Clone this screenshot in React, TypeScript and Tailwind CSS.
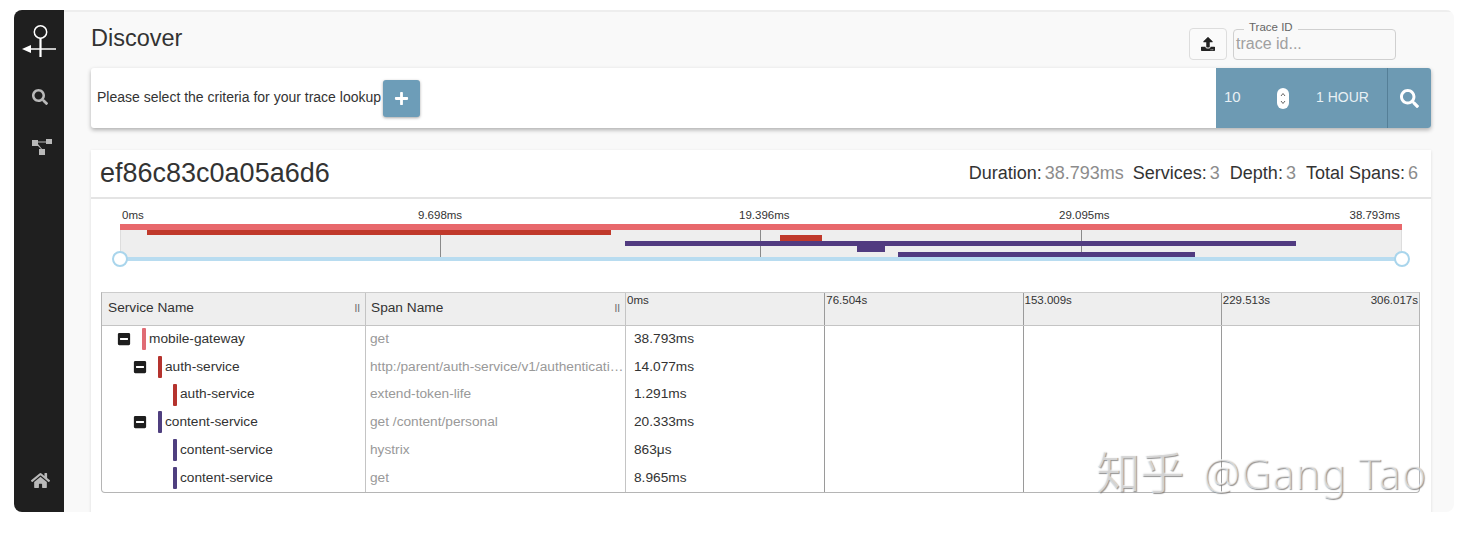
import { FaHome, FaMinusSquare, FaPlus, FaSearch, FaUpload } from 'react-icons/fa';

const MINIMAP_LEFT = 120;

const MINIMAP_TICKS = [440, 760, 1081];

const MINIMAP_LABELS = [
    { label: '0ms', className: 'left-[31px]' },
    { label: '9.698ms', className: 'left-[327px]' },
    { label: '19.396ms', className: 'left-[648px]' },
    { label: '29.095ms', className: 'left-[968px]' },
    { label: '38.793ms', className: 'right-[31px]' },
];

const MINIMAP_SPANS = [
    { x1: 147, x2: 611, y: 230, h: 5, color: '#c0392b' },
    { x1: 780, x2: 822, y: 235, h: 6, color: '#c0392b' },
    { x1: 625, x2: 1296, y: 241, h: 5, color: '#513b80' },
    { x1: 857, x2: 885, y: 246, h: 6, color: '#513b80' },
    { x1: 898, x2: 1195, y: 252, h: 5, color: '#513b80' },
];

const ROWS = [
    { indent: 0, collapsible: true, color: '#e06c75', service: 'mobile-gateway', span: 'get', duration: '38.793ms' },
    { indent: 16, collapsible: true, color: '#b5332e', service: 'auth-service', span: 'http:/parent/auth-service/v1/authenticati…', duration: '14.077ms' },
    { indent: 31, collapsible: false, color: '#b5332e', service: 'auth-service', span: 'extend-token-life', duration: '1.291ms' },
    { indent: 16, collapsible: true, color: '#4f3f7f', service: 'content-service', span: 'get /content/personal', duration: '20.333ms' },
    { indent: 31, collapsible: false, color: '#4f3f7f', service: 'content-service', span: 'hystrix', duration: '863μs' },
    { indent: 31, collapsible: false, color: '#4f3f7f', service: 'content-service', span: 'get', duration: '8.965ms' },
];

function Logo() {
    return (
        <svg width="36" height="36" viewBox="0 0 36 36" fill="none" stroke="white">
            <circle cx="19.5" cy="10" r="6.2" strokeWidth="1.5" />
            <path d="M19.5 16V35" strokeWidth="2.2" />
            <path d="M10 27H35" strokeWidth="1.5" />
            <path d="M1 27L10 23V31Z" fill="white" stroke="none" />
        </svg>
    );
}

function DependencyIcon() {
    return (
        <svg width="20" height="16" viewBox="0 0 20 16" fill="#b9b9b9">
            <rect x="0" y="1" width="6" height="6" />
            <rect x="14" y="0" width="6" height="5" />
            <rect x="7" y="10" width="6" height="6" />
            <path d="M6 2.5H14V3.5H6ZM5 6L9 10H10L6 5Z" />
        </svg>
    );
}

function Metric({ label, value, className = '' }: { label: string; value: string; className?: string }) {
    return (
        <span className={className}>
            <span className="text-[#333]">{label}:</span>
            <span className="ml-[3px] text-[#8c8c8c]">{value}</span>
        </span>
    );
}

function Minimap() {
    return (
        <div className="relative h-[93px]">
            {MINIMAP_LABELS.map(t => (
                <span key={t.label} className={`absolute top-[10px] text-[11.5px] leading-[13px] text-[#333] ${t.className}`}>{t.label}</span>
            ))}

            <div className="absolute left-[29px] top-[25px] h-[34px] w-[1282px] border-x border-[#ddd] bg-[#eeeeee]" />
            <div className="absolute left-[29px] top-[25px] h-[6px] w-[1282px] bg-[#e8686c]" />
            {MINIMAP_TICKS.map(x => (
                <div
                    key={x}
                    className="absolute top-[31px] h-[28px] w-px bg-[#8a8a8a]"
                    style={{ left: x - MINIMAP_LEFT + 29 }}
                />
            ))}
            {MINIMAP_SPANS.map(s => (
                <div
                    key={s.x1}
                    className="absolute"
                    style={{ left: s.x1 - MINIMAP_LEFT + 29, width: s.x2 - s.x1, top: s.y - 199, height: s.h, backgroundColor: s.color }}
                />
            ))}
            <div className="absolute left-[29px] top-[58px] h-[4px] w-[1282px] bg-[#b8dcf0]" />
            <div className="absolute left-[21px] top-[52px] h-[16px] w-[16px] rounded-full border-2 border-[#a9d5ec] bg-white" />
            <div className="absolute left-[1303px] top-[52px] h-[16px] w-[16px] rounded-full border-2 border-[#a9d5ec] bg-white" />
        </div>
    );
}

function SpanTable() {
    return (
        <div className="ml-[10px] w-[1319px] rounded-b-[4px] border border-[#b5b5b5] border-t-[#ccc] text-[13.7px]">
            <div className="flex h-[33px] border-b border-[#c4c4c4] bg-[#eeeeee] text-[#333]">
                <div className="flex w-[264px] items-center justify-between border-r border-[#c4c4c4] pb-[2px] pl-[6px] pr-[5px]">
                    <span>Service Name</span>
                    <span className="text-[10px] text-[#666]">II</span>
                </div>
                <div className="flex w-[260px] items-center justify-between border-r border-[#c4c4c4] pb-[2px] pl-[5px] pr-[5px]">
                    <span>Span Name</span>
                    <span className="text-[10px] text-[#666]">II</span>
                </div>
                <div className="grid flex-1 grid-cols-4 text-[11.5px] leading-[12px] text-[#333]">
                    <span className="pl-[1px] pt-[1px]">0ms</span>
                    <span className="border-l border-[#9a9a9a] pl-[1px] pt-[1px]">76.504s</span>
                    <span className="border-l border-[#9a9a9a] pl-[1px] pt-[1px]">153.009s</span>
                    <span className="flex justify-between border-l border-[#9a9a9a] pl-[1px] pr-[1px] pt-[1px]">
                        <span>229.513s</span>
                        <span>306.017s</span>
                    </span>
                </div>
            </div>
            {ROWS.map(row => (
                <div key={row.service + row.span} className="flex h-[27.7px]">
                    <div className="flex w-[264px] items-center border-r border-[#c4c4c4] pb-[1px]" style={{ paddingLeft: 15 + row.indent }}>
                        <span className="flex w-[17px] justify-start">
                            {row.collapsible && <FaMinusSquare className="h-[14px] w-[14px] text-[#1e1e1e]" />}
                        </span>
                        <span className="ml-[8px] h-[22px] w-[4px] rounded-[1px]" style={{ backgroundColor: row.color }} />
                        <span className="ml-[3px] text-[#333]">{row.service}</span>
                    </div>
                    <div className="flex w-[260px] items-center overflow-hidden whitespace-nowrap border-r border-[#c4c4c4] pb-[1px] pl-[4px] text-[#999]">
                        {row.span}
                    </div>
                    <div className="grid flex-1 grid-cols-4">
                        <span className="flex items-center pb-[1px] pl-[8px] text-[#333]">{row.duration}</span>
                        <span className="border-l border-[#9a9a9a]" />
                        <span className="border-l border-[#9a9a9a]" />
                        <span className="border-l border-[#9a9a9a]" />
                    </div>
                </div>
            ))}
        </div>
    );
}

export default function App() {
    return (
        <div className="relative h-[540px] w-[1466px] overflow-hidden bg-white pl-[14px] pr-[12px] pt-[10px] font-['Liberation_Sans',Arial,sans-serif]">
            <div className="flex h-[502px] overflow-hidden rounded-[8px]">
                {/* Sidebar */}
                <aside className="flex w-[50px] shrink-0 flex-col items-center bg-[#1f1f1f] pt-[12px]">
                    <Logo />
                    <FaSearch className="ml-[2px] mt-[31px] h-[16px] w-[16px] text-[#b9b9b9]" />
                    <div className="ml-[6px] mt-[34px]">
                        <DependencyIcon />
                    </div>
                    <FaHome className="mb-[22px] ml-[3px] mt-auto h-[19px] w-[19px] text-[#b9b9b9]" />
                </aside>

                {/* Main */}
                <main className="min-w-0 flex-1 border-t-2 border-[#eeeeee] bg-[#f9f9f9] pl-[27px] pr-[23px]">
                    <header className="flex h-[56px] items-start justify-between">
                        <h1 className="mt-[12px] text-[23.5px] leading-[28px] text-[#333]">Discover</h1>
                        <div className="mr-[35px] mt-[16px] flex items-end gap-[6px]">
                            <button className="flex h-[32px] w-[38px] items-center justify-center rounded-[4px] border border-[#ddd] bg-[#fafafa]">
                                <FaUpload className="h-[14px] w-[14px] text-[#222]" />
                            </button>
                            <div className="relative h-[31px] w-[163px] rounded-[4px] border border-[#d0d0d0] pl-[2px] text-[16px] leading-[27px] text-[#a0a0a0]">
                                trace id...
                                <span className="absolute -top-[9px] left-[10px] bg-[#f9f9f9] px-[5px] text-[11.5px] leading-[13px] text-[#666]">Trace ID</span>
                            </div>
                        </div>
                    </header>

                    {/* Search bar */}
                    <section className="flex h-[60px] overflow-hidden rounded-[3px] bg-white shadow-[0_2px_4px_rgba(0,0,0,0.3)]">
                        <div className="flex flex-1 items-center pl-[6px] text-[14px] text-[#333]">
                            <span className="mb-[2px]">Please select the criteria for your trace lookup</span>
                            <button className="ml-[2px] flex h-[37px] w-[37px] items-center justify-center rounded-[3px] bg-[#6d9db8] shadow-[0_1px_3px_rgba(0,0,0,0.35)]">
                                <FaPlus className="h-[15px] w-[15px] text-white" />
                            </button>
                        </div>
                        <div className="flex w-[215px] items-center bg-[#6d9ab3] text-white">
                            <span className="mb-[2px] ml-[8px] w-[53px] text-[15px] text-[#e8f0f4]">10</span>
                            <span className="flex h-[21px] w-[12px] flex-col items-center justify-center rounded-[6px] bg-white">
                                <svg width="6" height="15" viewBox="0 0 6 15" fill="none" stroke="#555" strokeWidth="0.9">
                                    <path d="M1 5L3 2.5L5 5M1 10L3 12.5L5 10" />
                                </svg>
                            </span>
                            <span className="mb-[2px] ml-[27px] w-[71px] text-[14px] text-[#e8f0f4]">1 HOUR</span>
                            <div className="flex h-full flex-1 items-center justify-center border-l border-[#557f97]">
                                <FaSearch className="h-[19px] w-[19px] text-white" />
                            </div>
                        </div>
                    </section>

                    {/* Trace */}
                    <section className="mt-[22px] h-[400px] bg-white shadow-[0_1px_3px_rgba(0,0,0,0.12)]">
                        <div className="flex h-[49px] items-center justify-between border-b-2 border-[#e4e4e4] pl-[9px] pr-[13px]">
                            <h2 className="text-[27px] text-[#333]">ef86c83c0a05a6d6</h2>
                            <div className="text-[18px]">
                                <Metric label="Duration" value="38.793ms" />
                                <Metric label="Services" value="3" className="ml-[9px]" />
                                <Metric label="Depth" value="3" className="ml-[10px]" />
                                <Metric label="Total Spans" value="6" className="ml-[10px]" />
                            </div>
                        </div>
                        <Minimap />
                        <SpanTable />
                    </section>
                </main>
            </div>

            {/* Watermark */}
            <div className="pointer-events-none absolute left-[1096px] top-[442px] flex items-baseline whitespace-nowrap font-['Noto_Sans','Noto_Sans_CJK_SC',sans-serif] font-light leading-[56px] text-white/60 [text-shadow:1px_1px_1px_rgba(120,120,120,0.8)]">
                <span className="font-['Noto_Sans_CJK_SC',sans-serif] text-[44px] font-normal">知乎</span>
                <span className="ml-[19px] text-[41.5px] tracking-[1px]">@Gang Tao</span>
            </div>
        </div>
    );
}
